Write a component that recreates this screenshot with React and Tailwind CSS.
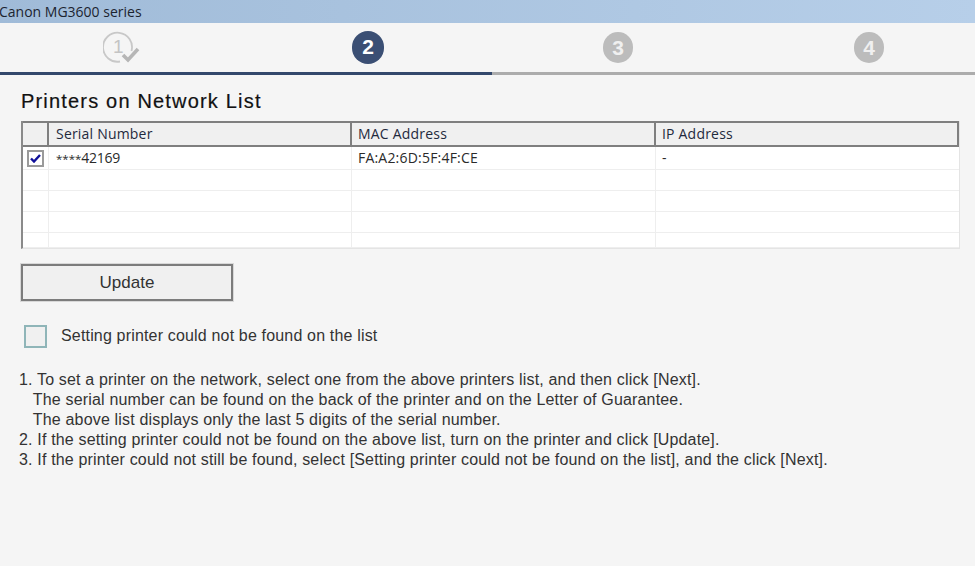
const rows = [
  { checked: true, stars: "****", serial: "42169", mac: "FA:A2:6D:5F:4F:CE", ip: "-", h: "h-[23px]" },
  { h: "h-[21px]" },
  { h: "h-[21px]" },
  { h: "h-[21px]" },
  { h: "h-[15px]" },
];

const notes = [
  "1. To set a printer on the network, select one from the above printers list, and then click [Next].",
  "\u00a0\u00a0\u00a0The serial number can be found on the back of the printer and on the Letter of Guarantee.",
  "\u00a0\u00a0\u00a0The above list displays only the last 5 digits of the serial number.",
  "2. If the setting printer could not be found on the above list, turn on the printer and click [Update].",
  "3. If the printer could not still be found, select [Setting printer could not be found on the list], and the click [Next].",
];

function StepOne() {
  return (
    <svg width="38" height="34" viewBox="0 0 38 34" className="block">
      <path d="M28.5 20 A14.5 14.5 0 1 0 17 30.5" fill="none" stroke="#c8c8c8" strokeWidth="1.8" />
      <path d="M20 24 L25 29 L35 18" fill="none" stroke="#b6b6b6" strokeWidth="3.6" />
      <text x="10" y="22" fontSize="19" fill="#c4c4c4" fontFamily="Liberation Sans, sans-serif">1</text>
    </svg>
  );
}

function Step({ n, active }) {
  return (
    <div
      className={`flex items-center justify-center rounded-full font-bold text-[21px] ${
        active ? "w-[32px] h-[33px] bg-[#3b4f74] text-white" : "w-[30px] h-[31px] bg-[#bcbcbc] text-[#f0f0f0]"
      }`}
    >
      {n}
    </div>
  );
}

export default function App() {
  return (
    <div className="w-[975px] h-[566px] overflow-hidden bg-[#f5f5f5] font-['Liberation_Sans',sans-serif] text-[#222]">
      {/* Title bar */}
      <div className="h-[23px] flex items-center overflow-hidden bg-gradient-to-r from-[#a0bbd8] to-[#b7cfe9]">
        <span className="ml-[-1px] text-[14px] text-[#1c2430] font-['Open_Sans',sans-serif]">Canon MG3600 series</span>
      </div>

      {/* Steps */}
      <div className="h-[49px] flex items-center pl-[103px]">
        <div className="w-[249px] pt-[1px]"><StepOne /></div>
        <div className="w-[251px] mt-[-1px]"><Step n="2" active /></div>
        <div className="w-[251px]"><Step n="3" /></div>
        <Step n="4" />
      </div>
      <div className="flex h-[3px]">
        <div className="w-[492px] bg-[#33486c]" />
        <div className="flex-1 bg-[#acacac]" />
      </div>

      <div className="pl-[21px] pr-[15px]">
        <h1 className="mt-[15px] text-[20px] leading-[22px] tracking-[1.18px] text-[#111] [-webkit-text-stroke:0.2px_#111]">
          Printers on Network List
        </h1>

        {/* Printer table */}
        <div className="mt-[9px] w-[939px] bg-white border-r border-b border-[#e4e4e4] border-l-2 border-l-[#8a8a8a] text-[14px] tracking-[0.2px] font-['Open_Sans',sans-serif]">
          <div className="h-[26px] flex bg-[#f0f0f0] border-t-2 border-b-2 border-[#7f7f7f] border-r-2 border-r-[#7f7f7f] text-[#1f2a3d]">
            <div className="w-[26px] border-r-2 border-[#7f7f7f]" />
            <div className="w-[303px] pl-[7px] border-r-2 border-[#7f7f7f] leading-[22px]">Serial Number</div>
            <div className="w-[304px] pl-[6px] border-r-2 border-[#7f7f7f] leading-[22px]">MAC Address</div>
            <div className="flex-1 pl-[6px] leading-[22px]">IP Address</div>
          </div>
          {rows.map((row, i) => (
            <div key={i} className={`flex ${row.h} border-b border-[#eeeeee] text-[#2a2a2a]`}>
              <div className="w-[26px] flex items-center justify-center border-r border-[#eeeeee]">
                {row.checked && (
                  <div className="w-[17px] h-[17px] bg-white border-2 border-[#9a9a9a] flex items-center justify-center">
                    <svg width="11" height="9" viewBox="0 0 11 9">
                      <path d="M1 4.5 L4 7.5 L10 1" fill="none" stroke="#10109a" strokeWidth="2.4" />
                    </svg>
                  </div>
                )}
              </div>
              <div className="w-[303px] pl-[7px] border-r border-[#eeeeee] leading-[22px]">
                {row.stars && <span className="text-[11.5px] tracking-normal">{row.stars}</span>}
                {row.serial && <span className="text-[14px] tracking-[-0.3px]">{row.serial}</span>}
              </div>
              <div className="w-[304px] pl-[6px] border-r border-[#eeeeee] leading-[22px]">{row.mac}</div>
              <div className="flex-1 pl-[6px] leading-[22px]">{row.ip}</div>
            </div>
          ))}
        </div>

        <button className="mt-[15px] pt-[1px] block w-[212px] h-[37px] bg-[#f0f0f0] border-2 border-[#7c7c7c] outline outline-1 outline-[#d8d8d8] text-[17px] text-[#333]">
          Update
        </button>

        <label className="mt-[23px] flex items-center h-[24px] text-[16px] tracking-[0.17px] text-[#333]">
          <span className="ml-[3px] w-[23px] h-[23px] bg-[#f0f0f0] border-2 border-[#8fb5b8]" />
          <span className="ml-[14px]">Setting printer could not be found on the list</span>
        </label>

        <div className="mt-[22px] ml-[-2px] text-[16px] tracking-[0.17px] leading-[20px] text-[#333] whitespace-nowrap">
          {notes.map((note, i) => (
            <p key={i}>{note}</p>
          ))}
        </div>
      </div>
    </div>
  );
}
